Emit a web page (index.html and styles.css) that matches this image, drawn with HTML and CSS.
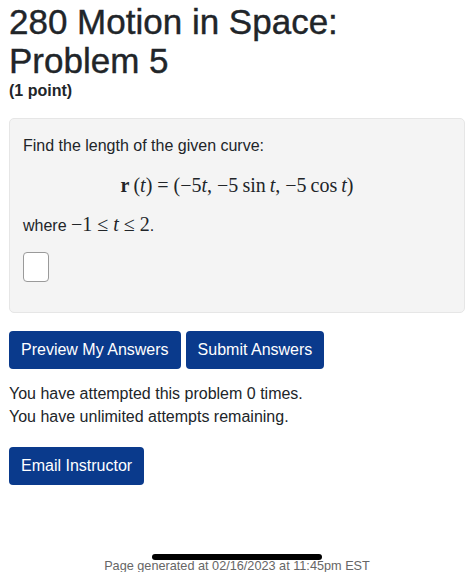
FILE: index.html
```html
<!DOCTYPE html>
<html lang="en">
<head>
  <meta charset="UTF-8">
  <meta name="viewport" content="width=device-width, initial-scale=1">
  <title>280 Motion in Space: Problem 5</title>
  <link rel="stylesheet" href="styles.css">
</head>
<body>
  <div class="page">
    <h1>280 Motion in Space: Problem 5</h1>
    <div class="points">(1 point)</div>

    <!-- Problem box -->
    <div class="problem">
      <p>Find the length of the given curve:</p>
      <div class="eq">
        <span class="vec">r</span>&thinsp;(<i>t</i>) = (&minus;5<i>t</i>, &minus;5&thinsp;sin&thinsp;<i>t</i>, &minus;5&thinsp;cos&thinsp;<i>t</i>)
      </div>
      <p>where <span class="m">&minus;1 &le; <i>t</i> &le; 2</span>.</p>
      <input class="answer" type="text" aria-label="answer">
    </div>

    <div class="actions">
      <button class="btn">Preview My Answers</button>
      <button class="btn">Submit Answers</button>
    </div>

    <div class="attempts">
      <p>You have attempted this problem 0 times.</p>
      <p>You have unlimited attempts remaining.</p>
    </div>

    <button class="btn">Email Instructor</button>

    <div class="footer">Page generated at 02/16/2023 at 11:45pm EST</div>
  </div>
  <div class="home-bar"></div>
</body>
</html>
```

FILE: styles.css
```css
* {
  box-sizing: border-box;
  margin: 0;
  padding: 0;
}

body {
  background: #fff;
  color: #212529;
  font-family: "Liberation Sans", Arial, sans-serif;
  font-size: 16px;
  line-height: 1.5;
}

.page {
  padding: 2px 9px 0;
}

h1 {
  font-size: 35px;
  font-weight: normal;
  line-height: 39px;
  width: 380px;
  -webkit-text-stroke: 0.4px #212529;
}

.points {
  font-size: 16px;
  font-weight: bold;
  line-height: 22px;
}

/* Caja del problema */
.problem {
  margin-top: 16px;
  background: #f4f4f4;
  border: 1px solid #e6e6e6;
  border-radius: 5px;
  padding: 15px 13px 30px;
  height: 195px;
}

.eq {
  text-align: center;
  font-family: "Liberation Serif", "DejaVu Serif", serif;
  font-size: 20px;
  margin: 12px 0 14px;
}

.vec {
  font-weight: bold;
}

.m {
  font-family: "Liberation Serif", "DejaVu Serif", serif;
  font-size: 20px;
  line-height: 1;
}

.answer {
  display: block;
  margin-top: 14px;
  width: 26px;
  height: 30px;
  border: 1px solid #9a9a9a;
  border-radius: 4px;
  background: #fff;
}

/* Botones */
.actions {
  display: flex;
  gap: 5px;
  margin-top: 18px;
}

.btn {
  background: #0a3a8c;
  color: #fff;
  border: none;
  border-radius: 4px;
  font-family: inherit;
  font-size: 16px;
  height: 38px;
  padding: 0 12px;
}

.attempts {
  margin: 13px 0 19px;
  line-height: 23px;
}

.footer {
  text-align: center;
  color: #666;
  font-size: 12.7px;
  line-height: 12px;
  margin-top: 75px;
}

.home-bar {
  position: absolute;
  left: 152px;
  top: 554px;
  width: 170px;
  height: 6px;
  border-radius: 3px;
  background: #000;
}
```
